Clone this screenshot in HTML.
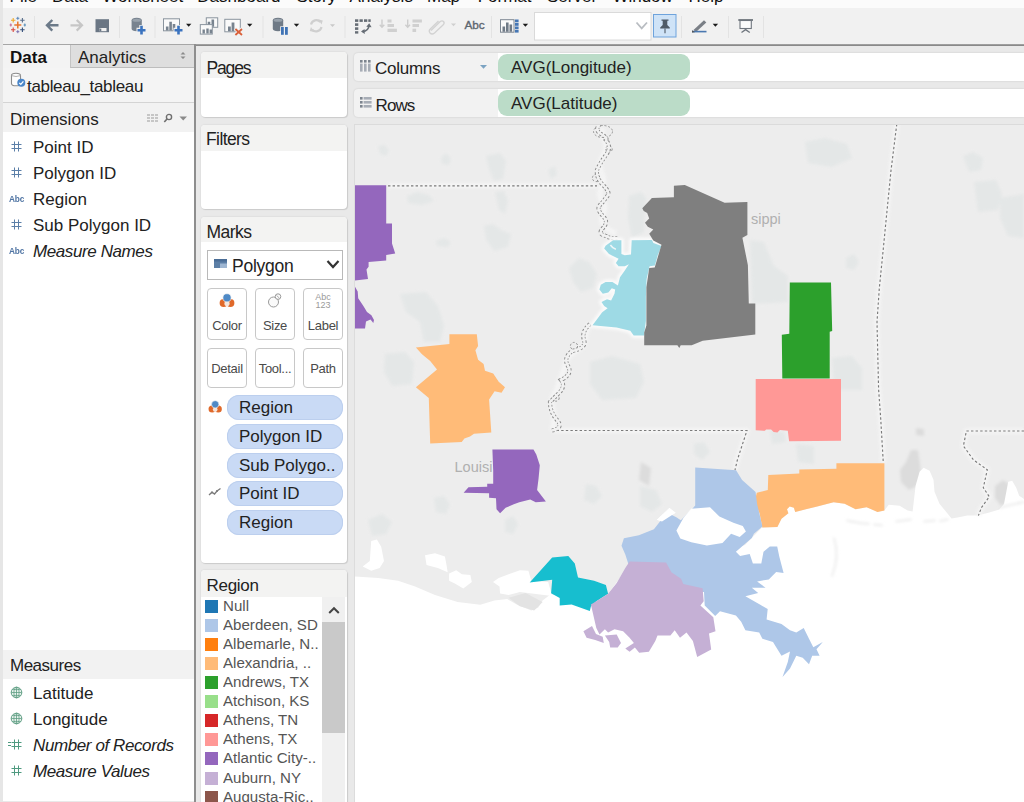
<!DOCTYPE html>
<html>
<head>
<meta charset="utf-8">
<style>
*{box-sizing:border-box;margin:0;padding:0}
html,body{width:1024px;height:802px;overflow:hidden;background:#f0f0f0;font-family:"Liberation Sans",sans-serif;color:#222}
.abs{position:absolute}
#root{position:relative;width:1024px;height:802px;overflow:hidden;background:#e9e9e9}
/* top */
#menubar{left:0;top:0;width:1024px;height:8px;background:#fbfbfb;overflow:hidden}
#menubar span{position:absolute;top:-13px;font-size:17px;color:#111;white-space:nowrap;letter-spacing:0}
#toolbar{left:0;top:8px;width:1024px;height:36px;background:#f1f1f1}
#topline{left:194px;top:44px;width:830px;height:2px;background:linear-gradient(#a9a9a9,#7f7f7f)}
/* left panel */
#leftedge{left:0;top:0;width:3px;height:802px;background:#e6e6e6}
#left{left:3px;top:45px;width:191px;height:756px;background:#fff}
#lsep{left:194px;top:44px;width:2px;height:758px;background:#8e8e8e}
.hdr{background:#f2f2f2}
.t17{font-size:17px;color:#222;white-space:nowrap}
.card{background:#fff;border-radius:4px;box-shadow:0 0 2px rgba(0,0,0,.12),1px 1px 1px rgba(0,0,0,.10)}
.cardh{background:#f3f3f2;border-radius:4px 4px 0 0}
.pillb{background:#c9daf5;box-shadow:inset 0 0 0 1px #bccfee;border-radius:12px;height:25px;font-size:17px;line-height:25px;padding-left:12px;color:#222;white-space:nowrap;overflow:hidden}
.pillg{background:#bbdcc8;border-radius:9px;height:26px;font-size:17px;line-height:27px;padding-left:13px;color:#222;white-space:nowrap}
.btn{border:1px solid #c8c8c8;border-radius:4px;background:#fff;width:40px;height:50px;font-size:13px;text-align:center;color:#4a4a4a}
.leg{font-size:15.1px;color:#555;white-space:nowrap;left:223px}
.sw{left:205px;width:13px;height:13px}
</style>
</head>
<body>
<div id="root">
<div id="menubar" class="abs">
<span style="left:9.5px">File</span><span style="left:52px">Data</span><span style="left:102.3px">Worksheet</span><span style="left:197.3px">Dashboard</span><span style="left:296.5px">Story</span><span style="left:349.6px">Analysis</span><span style="left:427px">Map</span><span style="left:477.7px">Format</span><span style="left:547px">Server</span><span style="left:612.4px">Window</span><span style="left:688.6px">Help</span>
</div>
<div id="toolbar" class="abs"></div>
<div id="topline" class="abs"></div><div class="abs" style="left:3px;top:44px;width:191px;height:1px;background:#a6a6a6"></div>
<div id="leftedge" class="abs"></div>
<div id="left" class="abs"></div>
<div id="lsep" class="abs"></div>

<!-- left panel -->
<div class="abs" style="left:3px;top:45px;width:191px;height:23px;background:#f3f3f3"></div>
<div class="abs" style="left:70px;top:45px;width:124px;height:23px;background:#dedede;border-left:1px solid #c4c4c4;border-bottom:1px solid #bdbdbd"></div>
<div class="abs t17" style="left:10px;top:48px;font-weight:700;color:#111;line-height:20px">Data</div>
<div class="abs t17" style="left:78px;top:48px;height:19px;overflow:hidden;line-height:20px;color:#222">Analytics</div>
<svg class="abs" style="left:179px;top:51px" width="8" height="9" viewBox="0 0 8 9"><path d="M1.5 3.6 L4 1 L6.5 3.6 Z M1.5 5.4 L4 8 L6.5 5.4 Z" fill="#8a8a8a"/></svg>
<div class="abs" style="left:3px;top:68px;width:191px;height:34px;background:#f4f4f4"></div>
<svg class="abs" style="left:10px;top:72px" width="17" height="17" viewBox="0 0 17 17"><path d="M1.5 3.5 Q1.5 1.2 6 1.2 Q10.5 1.2 10.5 3.5 V11.5 Q10.5 13.8 6 13.8 Q1.5 13.8 1.5 11.5 Z" fill="#fdfdfd" stroke="#8c8c8c" stroke-width="1.1"/><path d="M1.5 3.6 Q6 5.4 10.5 3.6" fill="none" stroke="#a8a8a8" stroke-width="0.9"/><circle cx="11.3" cy="10.8" r="4" fill="#4a86c9"/><path d="M9.3 10.9 L10.8 12.4 L13.4 9.4" fill="none" stroke="#fff" stroke-width="1.3"/></svg>
<div class="abs t17" style="left:27px;top:76.5px;line-height:20px;letter-spacing:-0.33px">tableau_tableau</div>
<div class="abs" style="left:3px;top:102px;width:191px;height:1px;background:#d4d4d4"></div>
<div class="abs hdr" style="left:3px;top:103px;width:191px;height:29px"></div>
<div class="abs t17" style="left:10px;top:110px;line-height:20px">Dimensions</div>
<svg class="abs" style="left:147px;top:113px" width="42" height="12" viewBox="0 0 42 12"><g fill="#c6c6c6"><rect x="0" y="1" width="3" height="2"/><rect x="4" y="1" width="3" height="2"/><rect x="8" y="1" width="3" height="2"/><rect x="0" y="4" width="3" height="2"/><rect x="4" y="4" width="3" height="2"/><rect x="8" y="4" width="3" height="2"/><rect x="0" y="7" width="3" height="2"/><rect x="4" y="7" width="3" height="2"/><rect x="8" y="7" width="3" height="2"/></g><circle cx="22" cy="4" r="2.6" fill="none" stroke="#6f6f6f" stroke-width="1.4"/><path d="M20 6 L17.3 9" stroke="#6f6f6f" stroke-width="1.6"/><path d="M32.5 3.5 L40 3.5 L36.2 7.5 Z" fill="#8a8a8a"/></svg>
<svg class="abs" style="left:11px;top:141px" width="11" height="11" viewBox="0 0 11 11"><path d="M3.5 0.5V10.5M7.5 0.5V10.5M0.5 3.5H10.5M0.5 7.5H10.5" stroke="#5b7fa8" stroke-width="1" fill="none"/></svg>
<div class="abs t17" style="left:33px;top:137.5px;line-height:20px;">Point ID</div>
<svg class="abs" style="left:11px;top:167px" width="11" height="11" viewBox="0 0 11 11"><path d="M3.5 0.5V10.5M7.5 0.5V10.5M0.5 3.5H10.5M0.5 7.5H10.5" stroke="#5b7fa8" stroke-width="1" fill="none"/></svg>
<div class="abs t17" style="left:33px;top:163.5px;line-height:20px;">Polygon ID</div>
<div class="abs" style="left:9px;top:194px;font-size:9px;line-height:10px;color:#4f74a3;letter-spacing:-0.2px;font-weight:700;transform:scaleX(.92);transform-origin:0 0">Abc</div>
<div class="abs t17" style="left:33px;top:189.5px;line-height:20px;">Region</div>
<svg class="abs" style="left:11px;top:219px" width="11" height="11" viewBox="0 0 11 11"><path d="M3.5 0.5V10.5M7.5 0.5V10.5M0.5 3.5H10.5M0.5 7.5H10.5" stroke="#5b7fa8" stroke-width="1" fill="none"/></svg>
<div class="abs t17" style="left:33px;top:215.5px;line-height:20px;">Sub Polygon ID</div>
<div class="abs" style="left:9px;top:246px;font-size:9px;line-height:10px;color:#4f74a3;letter-spacing:-0.2px;font-weight:700;transform:scaleX(.92);transform-origin:0 0">Abc</div>
<div class="abs t17" style="left:33px;top:241.5px;line-height:20px;font-style:italic;letter-spacing:-0.4px;">Measure Names</div>
<div class="abs hdr" style="left:3px;top:650px;width:191px;height:29px"></div>
<div class="abs t17" style="left:10px;top:656px;line-height:20px;letter-spacing:-0.5px">Measures</div>
<svg class="abs" style="left:10px;top:686px" width="13" height="13" viewBox="0 0 13 13"><circle cx="6.5" cy="6.5" r="5.3" fill="#eaf3ee" stroke="#5f9e84" stroke-width="1"/><path d="M1.2 6.5H11.8M6.5 1.2V11.8M2.3 3.6H10.7M2.3 9.4H10.7" stroke="#5f9e84" stroke-width="0.8" fill="none"/><ellipse cx="6.5" cy="6.5" rx="2.6" ry="5.3" fill="none" stroke="#5f9e84" stroke-width="0.8"/></svg>
<div class="abs t17" style="left:33px;top:683.5px;line-height:20px;">Latitude</div>
<svg class="abs" style="left:10px;top:712px" width="13" height="13" viewBox="0 0 13 13"><circle cx="6.5" cy="6.5" r="5.3" fill="#eaf3ee" stroke="#5f9e84" stroke-width="1"/><path d="M1.2 6.5H11.8M6.5 1.2V11.8M2.3 3.6H10.7M2.3 9.4H10.7" stroke="#5f9e84" stroke-width="0.8" fill="none"/><ellipse cx="6.5" cy="6.5" rx="2.6" ry="5.3" fill="none" stroke="#5f9e84" stroke-width="0.8"/></svg>
<div class="abs t17" style="left:33px;top:709.5px;line-height:20px;">Longitude</div>
<svg class="abs" style="left:11px;top:739px" width="11" height="11" viewBox="0 0 11 11"><path d="M3.5 0.5V10.5M7.5 0.5V10.5M0.5 3.5H10.5M0.5 7.5H10.5" stroke="#4f9a80" stroke-width="1" fill="none"/></svg>
<div class="abs" style="left:8px;top:742px;width:3px;height:1px;background:#4f9a80"></div><div class="abs" style="left:8px;top:745px;width:3px;height:1px;background:#4f9a80"></div>
<div class="abs t17" style="left:33px;top:735.5px;line-height:20px;font-style:italic;letter-spacing:-0.4px;">Number of Records</div>
<svg class="abs" style="left:11px;top:765px" width="11" height="11" viewBox="0 0 11 11"><path d="M3.5 0.5V10.5M7.5 0.5V10.5M0.5 3.5H10.5M0.5 7.5H10.5" stroke="#4f9a80" stroke-width="1" fill="none"/></svg>
<div class="abs t17" style="left:33px;top:761.5px;line-height:20px;font-style:italic;letter-spacing:-0.4px;">Measure Values</div>
<!--LEFTPANEL_END-->

<!-- cards -->
<div class="abs card" style="left:201px;top:52px;width:146px;height:65px"><div class="cardh" style="height:26px"></div></div>
<div class="abs t17" style="left:206.5px;top:57.5px;line-height:20px;letter-spacing:-1.15px;font-size:17.5px">Pages</div>
<div class="abs card" style="left:201px;top:125px;width:146px;height:84px"><div class="cardh" style="height:26px"></div></div>
<div class="abs t17" style="left:206px;top:129px;line-height:20px;letter-spacing:-0.6px;font-size:17.5px">Filters</div>
<div class="abs card" style="left:201px;top:217px;width:146px;height:346px"><div class="cardh" style="height:25px"></div></div>
<div class="abs t17" style="left:206.5px;top:221.5px;line-height:20px;letter-spacing:-0.55px;font-size:17.5px">Marks</div>
<div class="abs" style="left:207px;top:250px;width:136px;height:30px;border:1px solid #b9b9b9;background:#fff"></div>
<svg class="abs" style="left:214px;top:259px" width="13" height="10" viewBox="0 0 13 10"><rect x="0" y="0" width="13" height="9" fill="#5c7fa6"/><rect x="0" y="0" width="13" height="2.5" fill="#4a6d96"/><rect x="6" y="4.5" width="7" height="4.5" fill="#9eb6d2"/></svg>
<div class="abs t17" style="left:232px;top:256px;line-height:20px;font-size:17.5px;letter-spacing:-0.25px">Polygon</div>
<svg class="abs" style="left:326px;top:259px" width="14" height="11" viewBox="0 0 14 11"><path d="M1.5 2 L7 8 L12.5 2" fill="none" stroke="#333" stroke-width="2.2"/></svg>
<div class="abs btn" style="left:207px;top:288px;height:52px"><div style="position:absolute;left:0;right:0;top:30px;line-height:14px;letter-spacing:-0.3px">Color</div></div>
<div class="abs btn" style="left:255px;top:288px;height:52px"><div style="position:absolute;left:0;right:0;top:30px;line-height:14px;letter-spacing:-0.3px">Size</div></div>
<div class="abs btn" style="left:303px;top:288px;height:52px"><div style="position:absolute;left:0;right:0;top:30px;line-height:14px;letter-spacing:-0.3px">Label</div></div>
<div class="abs btn" style="left:207px;top:348px;height:40px"><div style="position:absolute;left:0;right:0;top:13px;line-height:14px;letter-spacing:-0.3px">Detail</div></div>
<div class="abs btn" style="left:255px;top:348px;height:40px"><div style="position:absolute;left:0;right:0;top:13px;line-height:14px;letter-spacing:-0.3px">Tool...</div></div>
<div class="abs btn" style="left:303px;top:348px;height:40px"><div style="position:absolute;left:0;right:0;top:13px;line-height:14px;letter-spacing:-0.3px">Path</div></div>
<svg class="abs" style="left:219px;top:293px" width="16" height="15" viewBox="0 0 16 15"><circle cx="4.6" cy="10" r="4" fill="#e0692a"/><circle cx="11.4" cy="10" r="4" fill="#e0692a"/><circle cx="8" cy="10.6" r="2.6" fill="#f6e6dc"/><circle cx="8" cy="4.8" r="4.1" fill="#4f8ac6" stroke="#f4f4f4" stroke-width="0.7"/></svg>
<svg class="abs" style="left:267px;top:292px" width="16" height="17" viewBox="0 0 16 17"><circle cx="6.5" cy="10" r="5" fill="#fafafa" stroke="#9a9a9a" stroke-width="1"/><circle cx="11" cy="4.6" r="2.8" fill="#fafafa" stroke="#9a9a9a" stroke-width="1"/><path d="M9.5 3.4 L12.3 6" stroke="#9a9a9a" stroke-width="0.8"/></svg>
<div class="abs" style="left:303px;top:293px;width:40px;text-align:center;font-size:9px;line-height:8px;color:#9a9a9a;letter-spacing:0px">Abc<br>123</div>
<div class="abs pillb" style="left:227px;top:395px;width:116px">Region</div>
<div class="abs pillb" style="left:227px;top:423.5px;width:116px">Polygon ID</div>
<div class="abs pillb" style="left:227px;top:452.5px;width:116px">Sub Polygo..</div>
<div class="abs pillb" style="left:227px;top:481px;width:116px">Point ID</div>
<div class="abs pillb" style="left:227px;top:510px;width:116px">Region</div>
<svg class="abs" style="left:208px;top:400px" width="14.4" height="13.5" viewBox="0 0 16 15"><circle cx="4.6" cy="10" r="4" fill="#e0692a"/><circle cx="11.4" cy="10" r="4" fill="#e0692a"/><circle cx="8" cy="10.6" r="2.6" fill="#f6e6dc"/><circle cx="8" cy="4.8" r="4.1" fill="#4f8ac6" stroke="#f4f4f4" stroke-width="0.7"/></svg>
<svg class="abs" style="left:208px;top:486px" width="14" height="12" viewBox="0 0 14 12"><path d="M1 9 L4 6.2 L6.5 8 L9 5 L12.5 2.5" fill="none" stroke="#7a7a7a" stroke-width="1.3"/><circle cx="4" cy="6.4" r="1" fill="#7a7a7a"/><circle cx="9" cy="5" r="1" fill="#7a7a7a"/></svg>
<div class="abs card" style="left:201px;top:570px;width:146px;height:240px"><div class="cardh" style="height:27px"></div></div>
<div class="abs t17" style="left:206.5px;top:576px;line-height:20px;letter-spacing:-0.3px">Region</div>
<div class="abs" style="left:203px;top:597px;width:119px;height:205px;background:#fff"></div>
<div class="abs" style="left:322px;top:597px;width:23px;height:205px;background:#f0f0f0"></div>
<div class="abs" style="left:322px;top:622px;width:23px;height:111px;background:#c9c9c9"></div>
<svg class="abs" style="left:328px;top:606px" width="12" height="9" viewBox="0 0 12 9"><path d="M1.2 7 L6 2.2 L10.8 7" fill="none" stroke="#444" stroke-width="2"/></svg>
<div class="abs sw" style="top:600.0px;background:#1f77b4"></div><div class="abs leg" style="top:597.0px;line-height:18px;width:98px;overflow:hidden">Null</div>
<div class="abs sw" style="top:619.0px;background:#aec7e8"></div><div class="abs leg" style="top:616.0px;line-height:18px;width:98px;overflow:hidden">Aberdeen, SD</div>
<div class="abs sw" style="top:638.1px;background:#ff7f0e"></div><div class="abs leg" style="top:635.1px;line-height:18px;width:98px;overflow:hidden">Albemarle, N..</div>
<div class="abs sw" style="top:657.1px;background:#ffbb78"></div><div class="abs leg" style="top:654.1px;line-height:18px;width:98px;overflow:hidden">Alexandria, ..</div>
<div class="abs sw" style="top:676.2px;background:#2ca02c"></div><div class="abs leg" style="top:673.2px;line-height:18px;width:98px;overflow:hidden">Andrews, TX</div>
<div class="abs sw" style="top:695.2px;background:#98df8a"></div><div class="abs leg" style="top:692.2px;line-height:18px;width:98px;overflow:hidden">Atchison, KS</div>
<div class="abs sw" style="top:714.3px;background:#d62728"></div><div class="abs leg" style="top:711.3px;line-height:18px;width:98px;overflow:hidden">Athens, TN</div>
<div class="abs sw" style="top:733.4px;background:#ff9896"></div><div class="abs leg" style="top:730.4px;line-height:18px;width:98px;overflow:hidden">Athens, TX</div>
<div class="abs sw" style="top:752.4px;background:#9467bd"></div><div class="abs leg" style="top:749.4px;line-height:18px;width:98px;overflow:hidden">Atlantic City-..</div>
<div class="abs sw" style="top:771.5px;background:#c5b0d5"></div><div class="abs leg" style="top:768.5px;line-height:18px;width:98px;overflow:hidden">Auburn, NY</div>
<div class="abs sw" style="top:790.5px;background:#8c564b"></div><div class="abs leg" style="top:787.5px;line-height:18px;width:98px;overflow:hidden">Augusta-Ric..</div>
<!--CARDS_END-->

<!-- shelves -->
<div class="abs" style="left:354px;top:53px;width:670px;height:28px;background:#f2f2f2;border-radius:4px 0 0 4px;box-shadow:0 0 2px rgba(0,0,0,.15)"></div>
<div class="abs" style="left:498px;top:53px;width:526px;height:28px;background:#fff"></div>
<div class="abs" style="left:354px;top:89px;width:670px;height:28px;background:#f2f2f2;border-radius:4px 0 0 4px;box-shadow:0 0 2px rgba(0,0,0,.15)"></div>
<div class="abs" style="left:498px;top:89px;width:526px;height:28px;background:#fff"></div>
<svg class="abs" style="left:360px;top:60px" width="11" height="12" viewBox="0 0 11 12"><g fill="#a7adb6"><rect x="0" y="0" width="2.6" height="2.6" fill="#7d858f"/><rect x="4" y="0" width="2.6" height="2.6" fill="#7d858f"/><rect x="8" y="0" width="2.6" height="2.6" fill="#7d858f"/><rect x="0" y="3.6" width="2.6" height="8"/><rect x="4" y="3.6" width="2.6" height="8"/><rect x="8" y="3.6" width="2.6" height="8"/></g></svg>
<div class="abs t17" style="left:375px;top:59px;line-height:20px;letter-spacing:-0.25px">Columns</div>
<svg class="abs" style="left:479px;top:64px" width="9" height="6" viewBox="0 0 9 6"><path d="M1 1 H8 L4.5 4.800 Z" fill="#7ba3c2"/></svg>
<div class="abs pillg" style="left:498px;top:54px;width:192px">AVG(Longitude)</div>
<svg class="abs" style="left:360px;top:97px" width="12" height="11" viewBox="0 0 12 11"><g fill="#a7adb6"><rect x="0" y="0" width="2.6" height="2.6" fill="#7d858f"/><rect x="0" y="4" width="2.6" height="2.6" fill="#7d858f"/><rect x="0" y="8" width="2.6" height="2.6" fill="#7d858f"/><rect x="3.6" y="0" width="8" height="2.6"/><rect x="3.6" y="4" width="8" height="2.6"/><rect x="3.6" y="8" width="8" height="2.6"/></g></svg>
<div class="abs t17" style="left:375.5px;top:95.5px;line-height:20px;letter-spacing:-0.9px">Rows</div>
<div class="abs pillg" style="left:498px;top:90px;width:192px">AVG(Latitude)</div>
<!--SHELVES_END-->
<!-- map -->
<div class="abs" style="left:354px;top:124px;width:670px;height:678px;background:#fff;border-left:1px solid #dcdcdc"></div>
<svg class="abs" style="left:355px;top:124px" width="669" height="678" viewBox="355 124 669 678">
<defs><filter id="bl" x="-5%" y="-5%" width="110%" height="110%"><feGaussianBlur stdDeviation="1.6"/></filter></defs>
<rect x="355" y="124" width="669" height="678" fill="#ededed"/>
<!-- urban patches -->
<g fill="#e1e5e5" filter="url(#bl)" opacity="0.72">
<path d="M378 146l7-1 4 6-3 5-6-2z"/>
<path d="M441 158l5-5 5 6-2 6-7-1z"/>
<path d="M486 156l14-3 6 8-3 18-9 2-5-12z"/>
<path d="M548 170l7-4 2 9-6 4z"/>
<path d="M407 196l10-4 12 3 5 6-12 4-14-2z"/>
<path d="M495 192l9-1 4 10-3 13-6-4z"/>
<path d="M484 226l9-2 8 6 10 4-3 13-14 4-8-12z"/>
<path d="M436 241l8-3 7 4-3 5-11-1z"/>
<path d="M569 268l10-10 10 4 8 12-4 14-12 4-8-10z"/>
<path d="M400 294l26-2 12 14 6 20-4 16-16 0-4-20-14-10z"/>
<path d="M385 354l20-2 9 10-2 22-20 2-8-14z"/>
<path d="M629 196l12-4 5 6-2 34-12 6-4-20z"/>
<path d="M590 362l22-6 28 8 4 18-8 16-34 2-12-16z"/>
<path d="M805 142l20-4 22 6 5 14-20 9-24-4z"/>
<path d="M963 156l10-4 10 6-2 12-12 2z"/>
<path d="M974 182l22-2 6 14-4 16-20 2z"/>
<path d="M1000 198l24-4v44l-16-2-8-18z"/>
<path d="M750 240l14 2 10 24 14 10v26l-36 2z"/>
<path d="M846 258l8-4 5 8-5 8-8-2z"/>
<path d="M832 358l20-2 10 12v22h-28z"/>
<path d="M434 498l10-2 6 8-4 10-10-2z"/>
<path d="M586 484l10 2 6 10-8 8-10-4z"/>
<path d="M640 486l16 4 6 14-10 8-12-6z"/>
<path d="M368 520l14-6 10 8-6 12-14 2z"/>
<path d="M505 520l8-4 5 8-5 10-8-2z"/>
<path d="M770 430l14 2 2 10-14 2z"/>
<path d="M796 444l18 2v18l-16-2z"/>
<path d="M694 444l10-2 6 10-8 8-8-6z"/>
</g>
<g fill="#dcdcdc" filter="url(#bl)">
<path d="M900 470l6-8 5-12 7 0 2 14 1 12-4 10-8 4-8-8z"/>
<path d="M995 486l8-6 9 6-1 14-10 6-6-8z"/>
<path d="M916 428l8 1v7l-8-1z"/>
<path d="M641 462l10 6-2 18-10-6z"/>
</g>
<!-- water -->
<g fill="#ffffff">
<path d="M355 576.500L378.300 577.900L398.100 580.700L415.100 586.400L435 594.900L457.600 602L480.300 604.800L494.400 600.500L507.200 599.100L517.100 604.800L531.300 610.500L538.300 607.600L542.600 600.500L551 594L575 600L590 606L608 594L630 564L645 566L700 560L745 545L762 527.500L777.400 527L781.500 518.800L788.400 513.300L787 509.200L789.700 506.400L793.900 507.800L795.200 511.900L817.200 506.400L833.600 502.300L844.600 503.700L855.600 509.200L866.600 507.200L877.500 511.900L884.400 510.500L888.700 504.700L899.700 505.700L907.600 510.600L912.600 511.600L915.600 485.700L919.600 471.800L923.600 467.800L929.600 470.800L933.500 479.800L934.500 491.700L939.500 503.700L947.500 513.600L951.500 518.600L957.500 517.600L967.400 515.600L977.400 515.600L989.300 512.600L999.300 509.600L1004 504L1008.200 481.800L1012.200 480.800L1016.200 487.700L1019.200 495.700L1024 499V802H355Z"/>
<path d="M371.200 541.100L376.900 539.600L381.200 546.700L384 560.900L379.700 568L371.200 570.800L362.700 566.600L369.800 560.900Z"/>
<path d="M425 555.200L435 553.200L444.900 556.600L446.300 563.700L447.700 572.200L437.800 568L426.500 565.100Z"/>
<path d="M449.100 573.600L456.200 570.200L461.900 574.200L470.400 575L471.800 582.100L463.300 588.400L454.800 583.500L449.100 580.700Z"/>
<path d="M493 582.100L498.700 577.900L508.600 574.200L519.900 570.200L528.400 570.800L531.300 580.700L548.200 582.100L552 596L519.900 592L508.600 594.900L500.100 593.500L499.500 586.400Z"/>
<path d="M676.4 530.6L683.4 518.1L691.3 508.8L710 507.2L719.4 516.6L733.4 522.8L742.8 525.9L745.9 531.4L739.7 536.9L731.1 533.8L722.5 543.1L706.9 545.5L691.3 542.3L680.3 538.4ZM656.9 519.7L669.4 508L675.6 512.7L662 521.5Z"/>
</g>
<g fill="none" stroke="#e6e6e6" stroke-width="1.600" stroke-linecap="round" filter="url(#bl)">
<path d="M847 520.500q12 3 22 3.200M874 524.500l8 0.800M896 521.500q8-1 15-2M924 521.500l11-1M940 521l8-1.500"/>
<path d="M834 538q6 18-2 38" stroke="#e9e9e9"/>
<path d="M1000 507.500q12-3 24-5.500"/>
</g>
<path d="M508.600 597.700L525.600 592.900L542.600 602L534.100 610.500L519.900 606.200Z" fill="#e3e3e3"/>
<!-- border glow -->
<g fill="none" stroke="#f6f6f6" stroke-width="5" stroke-linejoin="round" opacity="0.9" filter="url(#bl)">
<path d="M388 185.800H597"/>
<path d="M552 430.500H747L742.400 444.500L737.500 459.500L735 470"/>
<path d="M896.800 124L891 170.500L886 221L882.700 254.700L879.300 288.400L877 322L878.600 389.400L880.800 420L883.300 463"/>
<path d="M1024 431H966.400L963.400 445.900L973.400 459.800L987.300 469.800L983.300 487.700L989.300 496.700L981.400 507.600L978.400 515.600"/>
<path d="M603 128c-4 8 4 12 3 20s-8 12-6 20 6 10 2 18-2 12 2 18-4 12-2 18 8 8 14 12"/>
<path d="M590 324c-6 10-4 14-6 20s-16 8-18 18-6 16-8 24-8 10-6 20 4 12 0 24"/>
</g>
<!-- borders -->
<g fill="none" stroke="#7a7a7a" stroke-width="1.150" stroke-dasharray="2.4 2.2">
<path d="M388 185.800H597"/>
<path d="M552 430.500H747L742.400 444.500L737.500 459.500L735 470"/>
<path d="M896.800 124L891 170.500L886 221L882.700 254.700L879.300 288.400L877 322L878.600 389.400L880.800 420L883.300 463"/>
<path d="M1024 431H966.400L963.400 445.900L973.400 459.800L987.300 469.800L983.300 487.700L989.300 496.700L981.400 507.600L978.400 515.600"/>
</g>
<g fill="none" stroke-linecap="butt">
<path d="M600 124Q594 130 601 134T606 140Q612 147 606 155T597 170Q596 178 603 185T608 195Q604 201 600 205T603 216Q609 222 603 228T606 236Q610 239 618 238" stroke="#8a8a8a" stroke-width="4.200" stroke-dasharray="2 1.800"/>
<path d="M590 324Q581 332 584 340T572 351Q563 358 568 366T561 380Q566 386 559 393T550 402Q550 412 557 420T552 430.500" stroke="#8a8a8a" stroke-width="4.200" stroke-dasharray="2 1.800"/>
<ellipse cx="603" cy="131.500" rx="9.500" ry="6" stroke="#8a8a8a" stroke-width="0.900" stroke-dasharray="2 1.800"/>
<circle cx="596" cy="178" r="3.600" stroke="#8a8a8a" stroke-width="0.900" stroke-dasharray="2 1.800"/>
<circle cx="609" cy="149" r="3.200" stroke="#8a8a8a" stroke-width="0.900" stroke-dasharray="2 1.800"/>
<circle cx="574" cy="346" r="3.600" stroke="#8a8a8a" stroke-width="0.900" stroke-dasharray="2 1.800"/>
<circle cx="556" cy="398" r="3.200" stroke="#8a8a8a" stroke-width="0.900" stroke-dasharray="2 1.800"/>
<path d="M600 124Q594 130 601 134T606 140Q612 147 606 155T597 170Q596 178 603 185T608 195Q604 201 600 205T603 216Q609 222 603 228T606 236Q610 239 618 238" stroke="#f1f1f1" stroke-width="2.400"/>
<path d="M590 324Q581 332 584 340T572 351Q563 358 568 366T561 380Q566 386 559 393T550 402Q550 412 557 420T552 430.500" stroke="#f1f1f1" stroke-width="2.400"/>
</g>
<!-- labels -->
<g font-family="Liberation Sans, sans-serif" font-size="14.500" fill="#b0b0b0">
<text x="454.500" y="472.300">Louisi</text>
<text x="751" y="223.500">sippi</text>
</g>
<!-- data polygons -->
<path d="M631.7 240.2L651.9 240L653.4 243L661.6 246L657.8 255L654.9 265.4L649.6 266.2L646.6 278.9L645.9 296.9L645.9 320.8L644 335.6L633.7 335.6L630.3 330.8L616.6 327.4L592.5 325.3L598.7 317.1L602.2 312.3L607.6 308.2L604.2 306.1L601.5 302L607 299.3L611.1 300.6L614.5 293.8L615.2 289.6L611.8 288.3L608.3 292.4L602.8 293.8L599.4 289.6L600.8 284.8L605.6 282.1L612.4 282.1L617.9 285.5L620 277.3L624.8 270.4L628.9 264.3L624.8 266.3L618.6 266.3L615.9 262.9L618.6 258.8L614.5 256.7L609 254L604.2 248.5L605.6 245.7L613.1 240.2L621.4 240.2L621.4 254L624.8 255.3L631 254.6Z" fill="none" stroke="#fbfbfb" stroke-width="5" stroke-linejoin="round" filter="url(#bl)"/>
<path fill="#9edae5" d="M631.7 240.2L651.9 240L653.4 243L661.6 246L657.8 255L654.9 265.4L649.6 266.2L646.6 278.9L645.9 296.9L645.9 320.8L644 335.6L633.7 335.6L630.3 330.8L616.6 327.4L592.5 325.3L598.7 317.1L602.2 312.3L607.6 308.2L604.2 306.1L601.5 302L607 299.3L611.1 300.6L614.5 293.8L615.2 289.6L611.8 288.3L608.3 292.4L602.8 293.8L599.4 289.6L600.8 284.8L605.6 282.1L612.4 282.1L617.9 285.5L620 277.3L624.8 270.4L628.9 264.3L624.8 266.3L618.6 266.3L615.9 262.9L618.6 258.8L614.5 256.7L609 254L604.2 248.5L605.6 245.7L613.1 240.2L621.4 240.2L621.4 254L624.8 255.3L631 254.6Z"/>
<path d="M610.400 245q2 3.200 5.500 4.200" stroke="#eef6f8" stroke-width="1.500" fill="none"/>
<path fill="#7f7f7f" d="M673.900 185.700L684.800 185.100L724.600 202.700L747.400 202.100L747.400 235L742.400 237.800L747.900 265.200L748.800 303.600L755.300 303.600L755.300 334.400L702.700 340.700L691.700 345.300L680.700 345.300L679.300 348L677.400 345.300L644.200 345.300L644.200 332.400L646.400 325.600L646.400 287.200L649.200 268L654.700 267.400L661.500 244.700L653.300 240.500L649.200 233.700L653.300 229.600L647.800 226.800L645 222.700L649.200 218.600L647.200 213.100L643.700 210.900L642.300 208.200L651.900 198L673.900 197.200Z"/>
<path fill="#9467bd" d="M355 185.300L386.200 185.300L386.200 223.400L392 223.400L392 243.400L395.200 253.500L386.200 255L386.200 260.400L368.600 262L368.600 266.700L366.500 269.400L368 279L355 280.400Z"/>
<path fill="#9467bd" d="M355 286.700L357.700 291.400L358.200 298.200L363.700 306.500L367 312L371.400 315.200L374 320L373.300 323L370.500 319.600L366 321.500L365 328.400L355 328.400Z"/>
<path fill="#ffbb78" d="M415.900 347.400L449.400 344.100L449.400 334.300L476.800 334.300L478.100 346L475.400 350.200L478.100 359.800L483.600 363.900L485 370.700L493.200 373.500L498.700 381.700L505 387.200L501.500 392.700L494.600 391.300L489.100 399.500L491.300 432.400L474 433.800L470 436.500L464.400 438.400L461.700 442L430.200 443.400L428.800 398.100L415.900 387.200L437 369.400L430.200 361.100L422 354.300Z"/>
<path fill="#9467bd" d="M492.400 449.400L533.500 449.400L536.300 454.400L539.800 465.300L538.500 479L537.100 490L545.900 501.500L535.700 502.300L530.200 499.600L519.300 502.300L513.800 504.300L505.600 507.800L500.100 513.300L496.500 509.200L496 498.200L489.100 497.700L489.100 493.300L463.600 492.700L468.500 487.300L487.200 486.700L487.200 483.700L493.200 483.700L493.200 470.800Z"/>
<path fill="#2ca02c" d="M789.800 282.400L831 282.400L832.200 331.100L829.700 331.800L829.700 378.500L782.300 378.500L781.800 334.800L789.300 333.800Z"/>
<path fill="#ff9896" d="M755.700 379L841 379L841 440.800L789.100 441.300L787.800 430.800L779.900 430L777.400 432.600L773.600 432L771.100 429.600L766.100 429.600L764.900 430.800L755.700 430.300Z"/>
<path fill="#ffbb78" d="M768.300 474.900L799.300 473.500L799.300 469.400L836.400 468.800L836.400 463.300L884.400 463.300L884.400 510.500L877.500 511.900L866.600 507.200L855.600 509.200L844.600 503.700L833.600 502.300L817.200 506.400L795.200 511.900L793.900 507.800L789.700 506.400L787 509.200L788.400 513.300L781.500 518.800L777.400 527L762.300 527.500L759.600 513.300L754.600 502.300L756.800 492.700L767.800 490Z"/>
<path fill="#aec7e8" d="M695.200 467.400L736.100 470.300L742.100 479.900L755.600 491.900L757.100 503.900L762.4 526.4L753.9 533.8L751.8 538L735.9 551.8L740.1 556L749.7 553.9L752.9 563.5L761.3 563.5L763.5 551.8L769.8 546.5L777.2 546.5L779.4 557.1L783.6 573L776.2 571.9L768.8 579.4L757.1 581.5L765.6 587.8L751.8 587.8L758.2 593.1L745.4 596.3L760.3 604.8L767.7 609L766.6 619.6L781.5 623.9L790 630.2L796.3 632.4L803.7 628.1L809 638.7L813.3 647.2L822.8 641.9L816.5 649.3L819.6 655.7L812.2 655.7L809 664.2L802.7 657.8L796.3 655.7L790 668.4L782.5 676.9L787.8 662L790 651.4L781.5 655.7L776.2 647.2L773 641.9L762.4 638.7L759.2 632.4L745.4 630.2L741.2 621.8L735.9 615.4L720 611.2L715.200 616.100L704.700 605.600L704 592L690 592L680 585L666 575L645 568L629 566L625.400 554.700L621.500 545.800L623.900 538.300L638.900 535.300L653.900 529.300L659.800 521.800L670.300 514.300L676.300 517.300L680.800 520.300L692.800 508.300L695.200 505.400Z"/>
<path fill="#ffffff" d="M676.4 530.6L683.4 518.1L691.3 508.8L710 507.2L719.4 516.6L733.4 522.8L742.8 525.9L745.9 531.4L739.7 536.9L731.1 533.8L722.5 543.1L706.9 545.5L691.3 542.3L680.3 538.4ZM656.9 519.7L669.4 508L675.6 512.7L662 521.5Z"/>
<path fill="#17becf" d="M529.700 582.500L552.200 557.600L568.300 556.100L574.800 563.600L578 577.600L594.100 580.800L605.900 585.100L608.100 593.700L596.300 601.200L590.900 606.600L589.800 610.900L571.600 604.400L559.700 605.500L559.700 598L551.100 593.300L552.200 579.700Z"/>
<path fill="#c5b0d5" d="M629.600 561.500L666.100 562.600L671.400 572.200L681.100 578.700L683.300 584L702.600 588.300L703.700 601.200L700.400 605.500L713.300 617.300L715.500 631.300L709 633.500L711.200 649.600L697.200 657.100L692.900 641L686.500 632.400L680 637.700L674.700 630.200L670.400 635.600L657.500 635.600L655.300 641L648.900 651.700L639.200 652.800L634.900 647.400L629.600 651.700L625.300 648.500L633.900 643.100L629.600 637.700L623.100 631.300L614.500 629.200L608.100 632.400L604.900 629.200L599.500 634.500L596.300 628.100L590.900 604.400L596.300 601.200L608.100 593.700L616.700 583L625.300 567.900Z"/>
<path fill="#c5b0d5" d="M583.400 631.300L592 625.900L596 634L602.700 636.700L603.800 643.100L595.200 639.900L586.600 637.700Z"/>
<path fill="#c5b0d5" d="M604.900 635.600L616.700 634.500L621 643.100L617.700 647.400L610.200 647.400L609.200 642Z"/>
</svg>
<div class="abs" style="left:354px;top:124px;width:670px;height:1px;background:#dbdbdb"></div><!--MAP_END-->
<!-- toolbar icons -->
<svg class="abs" style="left:0;top:8px" width="1024" height="36" viewBox="0 8 1024 36">
<!-- separators -->
<g stroke="#e3e3e3" stroke-width="1">
<path d="M34.500 16V38M119.500 16V38M155 16V38M263 16V38M345 16V38M491.500 16V38M681.500 16V38M728.500 16V38M763.500 16V38"/>
</g>
<!-- tableau logo -->
<g stroke-width="1.300" fill="none">
<path d="M17.800 21.500V28.500M14.300 25H21.300" stroke="#e8762d" stroke-width="1.500"/>
<path d="M13.200 18V22.400M11 20.200H15.400" stroke="#f0a92b" stroke-width="1.100"/>
<path d="M22.400 18V22.400M20.200 20.200H24.600" stroke="#5a6f8c" stroke-width="1.100"/>
<path d="M13.200 27.600V32M11 29.800H15.400" stroke="#d9493f" stroke-width="1.100"/>
<path d="M22.400 27.600V32M20.200 29.800H24.600" stroke="#36507a" stroke-width="1.100"/>
<path d="M17.800 16.800V19.800M16.300 18.300H19.300" stroke="#5c86b8" stroke-width="1"/>
<path d="M17.800 30.200V33.200M16.300 31.700H19.300" stroke="#7b6fae" stroke-width="1"/>
<path d="M10.800 23.500V26.500M9.600 25H12" stroke="#c76a92" stroke-width="1"/>
<path d="M24.800 23.500V26.500M23.600 25H26" stroke="#5b8fb8" stroke-width="1"/>
</g>
<!-- back / fwd -->
<path d="M58.500 25.300H47.500M52.300 20L47 25.300L52.300 30.600" fill="none" stroke="#6c7a89" stroke-width="2.400"/>
<path d="M70.500 25.300H81.500M76.700 20L82 25.300L76.700 30.600" fill="none" stroke="#c6c6c6" stroke-width="2.200"/>
<!-- save -->
<path d="M95.500 19.200H109V32.200H95.500Z" fill="#6a7684"/>
<rect x="99.500" y="28" width="7" height="3.200" fill="#f1f1f1"/><rect x="99.500" y="28.600" width="1.800" height="2.600" fill="#6a7684"/>
<!-- new datasource -->
<path d="M131.600 20.300Q131.600 17.800 136.700 17.800Q141.800 17.800 141.800 20.300V28.800Q141.800 31.200 136.700 31.200Q131.600 31.200 131.600 28.800Z" fill="#78838f"/>
<ellipse cx="136.700" cy="20.200" rx="4.300" ry="1.500" fill="#98a2ac"/>
<path d="M141.500 25V35M136.500 30H146.500" stroke="#f1f1f1" stroke-width="4.400"/>
<path d="M141.500 25.800V34.600M137.500 30.200H145.500" stroke="#3a73bf" stroke-width="2.600"/>
<!-- new worksheet -->
<rect x="163.500" y="18.800" width="16" height="12" fill="#fafafa" stroke="#8a949e" stroke-width="1"/>
<path d="M167.200 30.500V26.500M170.600 30.500V21.700M174 30.500V24.100" stroke="#78838f" stroke-width="2.600"/>
<path d="M178.500 25V35M173.500 30H183.500" stroke="#f1f1f1" stroke-width="4.400"/>
<path d="M178.500 25.800V34.600M174.500 30.200H182.500" stroke="#3a73bf" stroke-width="2.600"/>
<path d="M186 23.700H191.400L188.700 26.800Z" fill="#1a1a1a"/>
<!-- duplicate -->
<rect x="206.300" y="17.800" width="11.400" height="9.500" fill="#fafafa" stroke="#8a949e" stroke-width="1"/>
<path d="M209 26.800V21.700M212.800 26.800V19.400" stroke="#78838f" stroke-width="2.600"/>
<rect x="200.300" y="24.600" width="12" height="9.500" fill="#fafafa" stroke="#8a949e" stroke-width="1"/>
<path d="M203.700 33.500V29.600M207.500 33.500V28.500M210.800 33.500V29.600" stroke="#78838f" stroke-width="2.400"/>
<!-- clear -->
<rect x="224.800" y="19.300" width="15.500" height="12.500" fill="#fafafa" stroke="#8a949e" stroke-width="1"/>
<path d="M229.400 31.200V26.500M233 31.200V22.400" stroke="#78838f" stroke-width="2.800"/>
<path d="M235 28.500L242.400 35.300M242.400 28.500L235 35.300" stroke="#f1f1f1" stroke-width="3.600"/>
<path d="M235.400 29L242 35M242 29L235.400 35" stroke="#d9603a" stroke-width="1.800"/>
<path d="M247 23.700H252.400L249.700 26.800Z" fill="#1a1a1a"/>
<!-- datasource pause -->
<path d="M272.800 20.300Q272.800 17.800 278 17.800Q283.200 17.800 283.200 20.300V28.800Q283.200 31.200 278 31.200Q272.800 31.200 272.800 28.800Z" fill="#6f7a86"/>
<ellipse cx="278" cy="20.200" rx="4.400" ry="1.500" fill="#98a2ac"/>
<rect x="280.200" y="26.300" width="8.400" height="9" fill="#f1f1f1"/>
<rect x="281" y="27" width="2.800" height="7.800" fill="#3f73b5"/><rect x="285" y="27" width="2.800" height="7.800" fill="#3f73b5"/>
<path d="M293.800 23.700H299.200L296.500 26.800Z" fill="#1a1a1a"/>
<!-- refresh (disabled) -->
<g fill="none" stroke="#cfcfcf" stroke-width="2.200"><path d="M311 24.500A5.500 5.500 0 0 1 320.500 22"/><path d="M321.500 27A5.500 5.500 0 0 1 312 29.500"/></g>
<path d="M318.500 19.500L322.800 20.500L321.500 24.500Z M314 32L309.700 31L311 27Z" fill="#cfcfcf"/>
<path d="M330 24.300H335L332.500 27Z" fill="#c9c9c9"/>
<!-- swap -->
<g fill="#666d75"><rect x="355" y="19.300" width="3.300" height="2.600"/><rect x="359.500" y="19.300" width="3.300" height="2.600"/><rect x="364" y="19.300" width="3.300" height="2.600"/><rect x="368.300" y="19.300" width="2.400" height="2.600"/><rect x="355" y="23.300" width="3.300" height="2.600"/><rect x="355" y="27.300" width="3.300" height="2.600"/><rect x="355" y="31.200" width="3.300" height="2.400"/></g>
<path d="M362.500 31.500Q368.500 31 369 25.500" fill="none" stroke="#666d75" stroke-width="1.700"/>
<path d="M366.300 26.800L369.200 23.200L371.600 27.200Z M364.500 29L361 31.600L364.800 34Z" fill="#666d75"/>
<!-- sort asc/desc (disabled) -->
<g stroke="#cdcdcd" fill="none" stroke-width="1.400"><path d="M382 19.500V27M379.700 24.800L382 27.300L384.300 24.800"/><path d="M407.700 19.500V27M405.400 24.800L407.700 27.300L410 24.800"/></g>
<g fill="#d0d0d0"><rect x="387.500" y="19.500" width="4" height="3"/><rect x="387.500" y="24" width="6.500" height="3"/><rect x="387.500" y="28.700" width="9.400" height="3.300"/>
<rect x="412.500" y="19.500" width="9.400" height="3"/><rect x="412.500" y="24" width="6.500" height="3"/><rect x="412.500" y="28.700" width="3.600" height="3.300"/></g>
<!-- paperclip disabled -->
<path d="M431 30.500L440 21.800Q442 20 443.500 21.500Q445 23.200 443 25L434.500 33Q432 35 430 33Q428.200 31 430.500 28.800L438.500 21" fill="none" stroke="#d2d2d2" stroke-width="1.300"/>
<path d="M451 23.600H456L453.500 26.300Z" fill="#cfcfcf"/>
<text x="464.500" y="29.200" font-family="Liberation Sans, sans-serif" font-size="11.800" font-weight="400" fill="#5d6670" stroke="#5d6670" stroke-width="0.350" letter-spacing="-0.100">Abc</text>
<!-- fit chart -->
<rect x="500.500" y="19.700" width="13.500" height="12.500" fill="#fafafa" stroke="#7d8792" stroke-width="1"/>
<path d="M503.800 31.800V26.500M507.300 31.800V22.500M510.800 31.800V24.500" stroke="#6f7a86" stroke-width="2.600"/>
<g fill="#4677b5"><rect x="515" y="19.500" width="3.600" height="2.800"/><rect x="515" y="23" width="3.600" height="2.800"/><rect x="515" y="26.500" width="3.600" height="2.800"/><rect x="515" y="30" width="3.600" height="2.600"/></g>
<path d="M522.700 23.700H528.100L525.400 26.800Z" fill="#1a1a1a"/>
<!-- dropdown -->
<rect x="534.500" y="12.500" width="116.500" height="27.500" fill="#ffffff" stroke="#dadada" stroke-width="1"/>
<path d="M636.500 22.500L641.700 28.300L647 22.500" fill="none" stroke="#b9bdc2" stroke-width="1.800"/>
<!-- pin -->
<rect x="653.500" y="14.500" width="22.500" height="22.500" fill="#cfe3f7" stroke="#6ea3dc" stroke-width="1"/>
<path d="M661.500 19.500H668.500V20.800H667.300V25L669.800 27.500V28.500H660.200V27.500L662.700 25V20.800H661.500Z" fill="#4f5b68"/>
<path d="M665 28.500V33.200" stroke="#4f5b68" stroke-width="1.100"/>
<!-- pen -->
<path d="M693.500 30L704 20.300L706.300 22.600L696 32Z" fill="#7a7f86"/>
<path d="M692 31.600H706.500" stroke="#4a78b0" stroke-width="1.600"/>
<path d="M692 30.200L695 32.200L692 32.600Z" fill="#555"/>
<path d="M712.700 23.700H718.100L715.400 26.800Z" fill="#1a1a1a"/>
<!-- presentation -->
<path d="M738.300 20H753" stroke="#5f666e" stroke-width="1.600"/>
<rect x="740" y="20.500" width="11.300" height="8" fill="#fbfbfb" stroke="#6f767e" stroke-width="1.100"/>
<path d="M745.600 28.500V30.500M745.600 29.600L741.500 32.500M745.600 29.600L749.800 32.500" stroke="#6f767e" stroke-width="1.300" fill="none"/>
</svg>
<!--TOOLBARICONS_END-->
</div>
</body>
</html>
